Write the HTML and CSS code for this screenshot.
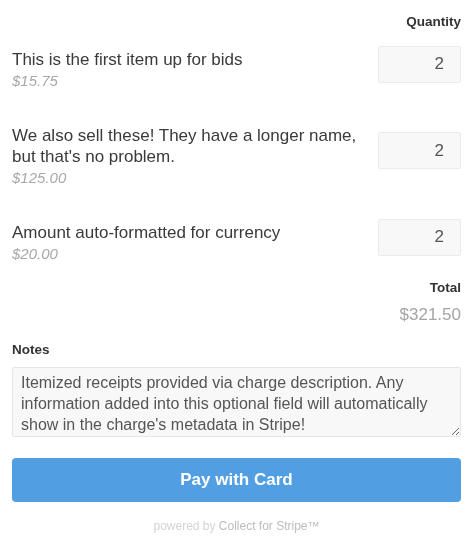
FILE: index.html
```html
<!DOCTYPE html>
<html lang="en">
<head>
    <meta charset="UTF-8">
    <meta name="viewport" content="width=device-width, initial-scale=1.0">
    <title>Collect for Stripe</title>
    <link rel="stylesheet" href="styles.css">
</head>
<body>
    <form class="collect-form">
        <div class="qty-head">Quantity</div>

        <div class="item-row">
            <div class="item-info">
                <div class="item-name">This is the first item up for bids</div>
                <div class="item-price">$15.75</div>
            </div>
            <input class="item-qty" type="text" value="2">
        </div>

        <div class="item-row">
            <div class="item-info">
                <div class="item-name">We also sell these! They have a longer name, but that's no problem.</div>
                <div class="item-price">$125.00</div>
            </div>
            <input class="item-qty" type="text" value="2">
        </div>

        <div class="item-row">
            <div class="item-info">
                <div class="item-name">Amount auto-formatted for currency</div>
                <div class="item-price">$20.00</div>
            </div>
            <input class="item-qty" type="text" value="2">
        </div>

        <div class="total">
            <div class="total-label">Total</div>
            <div class="total-amount">$321.50</div>
        </div>

        <label class="notes-label" for="notes">Notes</label>
        <textarea id="notes" class="notes">Itemized receipts provided via charge description. Any information added into this optional field will automatically show in the charge's metadata in Stripe!</textarea>

        <button type="button" class="pay-btn">Pay with Card</button>

        <div class="powered">powered by <span>Collect for Stripe™</span></div>
    </form>
</body>
</html>
```

FILE: styles.css
```css
body {
    margin: 0;
    background: #fff;
    font-family: "Liberation Sans", Arial, sans-serif;
    color: #333;
}

.collect-form {
    width: 449px;
    padding: 14px 0 0 12px;
}

.qty-head {
    text-align: right;
    font-weight: bold;
    font-size: 13.5px;
    line-height: 16px;
    color: #333;
}

.item-row {
    display: flex;
    align-items: center;
    justify-content: space-between;
    margin-top: 22px;
}

.qty-head + .item-row {
    margin-top: 7px;
}

.item-info {
    padding-top: 12px;
    max-width: 350px;
}

.item-name {
    font-size: 17px;
    line-height: 21px;
    color: #3a3a3a;
}

.item-price {
    font-size: 15px;
    line-height: 21px;
    font-style: italic;
    color: #a8a8a8;
}

.item-qty {
    box-sizing: border-box;
    width: 83px;
    height: 37px;
    padding: 0 16px 0 0;
    border: 1px solid #ebebeb;
    border-radius: 2px;
    background: #f8f8f8;
    font-family: inherit;
    font-size: 17px;
    color: #555;
    text-align: right;
}

.total {
    text-align: right;
    margin-top: 16px;
}

.total-label {
    font-weight: bold;
    font-size: 13.5px;
    line-height: 16px;
    color: #333;
}

.total-amount {
    margin-top: 7px;
    font-size: 17px;
    line-height: 24px;
    color: #a5a5a5;
}

.notes-label {
    display: block;
    margin-top: 15px;
    font-weight: bold;
    font-size: 13.5px;
    line-height: 16px;
    color: #333;
}

.notes {
    display: block;
    box-sizing: border-box;
    width: 449px;
    height: 70px;
    margin-top: 9px;
    padding: 4px 8px;
    border: 1px solid #e6e6e6;
    border-radius: 2px;
    background: #f8f8f8;
    font-family: inherit;
    font-size: 16px;
    line-height: 21px;
    color: #555;
    resize: vertical;
}

.pay-btn {
    display: block;
    width: 449px;
    height: 44px;
    margin-top: 21px;
    border: none;
    border-radius: 4px;
    background: #519ee3;
    color: #fff;
    font-family: inherit;
    font-weight: bold;
    font-size: 17px;
}

.powered {
    margin-top: 17px;
    text-align: center;
    font-size: 12px;
    color: #d3d3d3;

    span {
        color: #bcbcbc;
    }
}
```
